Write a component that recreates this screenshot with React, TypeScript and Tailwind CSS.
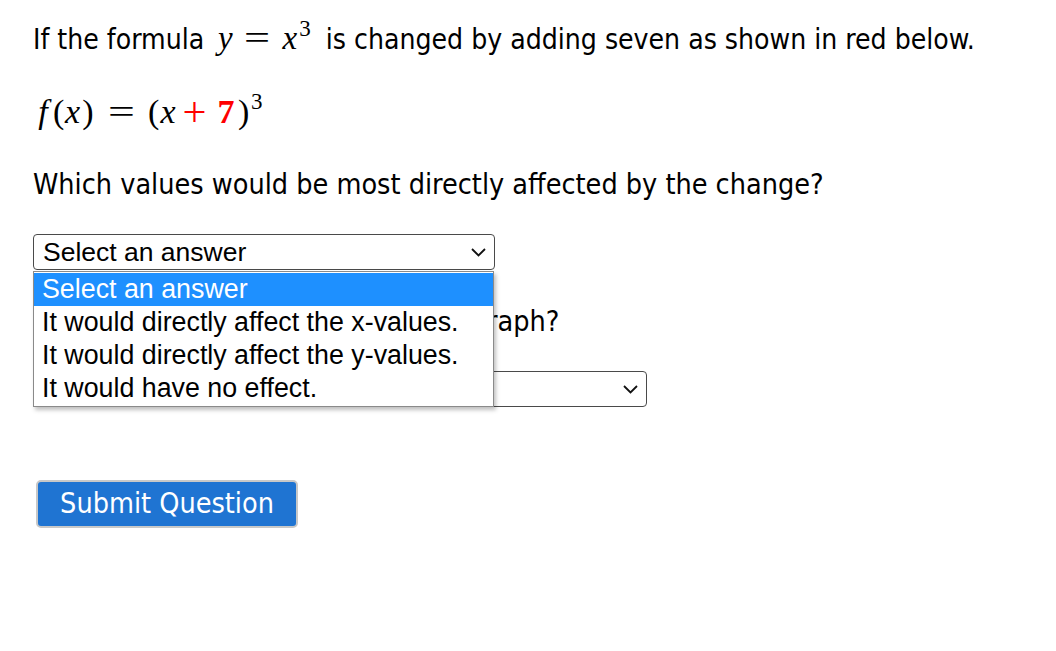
import React from "react";

function Chevron() {
  return (
    <svg width="15" height="9" viewBox="0 0 15 9" className="shrink-0">
      <polyline points="1,1 7.5,7.5 14,1" fill="none" stroke="#111" strokeWidth="1.8" />
    </svg>
  );
}

// one math glyph in a fixed-width slot
function G({ w, italic, children }: { w: string; italic?: boolean; children: React.ReactNode }) {
  return <span className={"inline-block text-center " + w + (italic ? " italic" : "")}>{children}</span>;
}

function Eq({ w }: { w: string }) {
  return <span className={"inline-block scale-x-[1.4] text-center " + w}>=</span>;
}

const options = [
  "Select an answer",
  "It would directly affect the x-values.",
  "It would directly affect the y-values.",
  "It would have no effect.",
];

function SelectBox({ width }: { width: string }) {
  return (
    <div
      className={
        "flex h-[36px] items-center justify-between rounded-[4px] border-[1.5px] border-[#4a4a4a] pl-[9px] pr-[8px] font-['Liberation_Sans',Arial,sans-serif] text-[26.5px] leading-none " +
        width
      }
    >
      <span>Select an answer</span>
      <Chevron />
    </div>
  );
}

export default function App() {
  return (
    <div className="relative min-h-[651px] bg-white pl-[33px] pt-[20px] text-black">
      <p className="h-[36px] whitespace-nowrap font-['DejaVu_Sans_Condensed','DejaVu_Sans',sans-serif] text-[28.1px] leading-[36px]">
        If the formula{" "}
        <span className="ml-[5px] mr-[7px] font-['Liberation_Serif','DejaVu_Serif',serif] text-[33px]">
          <G w="w-[16px]" italic>y</G>
          <Eq w="w-[22px] ml-[13px]" />
          <G w="w-[17px] ml-[13px]" italic>x</G>
          <span className="relative -top-[13px] ml-[1px] text-[23px]">3</span>
        </span>{" "}
        is changed by adding seven as shown in red below.
      </p>

      <p className="mt-[38px] h-[36px] whitespace-nowrap font-['Liberation_Serif','DejaVu_Serif',serif] text-[34px] leading-[36px]">
        <G w="w-[20px]" italic>f</G>
        <G w="w-[10px]">(</G>
        <G w="w-[19px]" italic>x</G>
        <G w="w-[12px]">)</G>
        <Eq w="w-[23px] ml-[16px]" />
        <G w="w-[10px] ml-[15px]">(</G>
        <G w="w-[20px]" italic>x</G>
        <span className="text-[#ff0000]">
          <G w="w-[23px] ml-[5px] scale-[1.25]">+</G>
          <G w="w-[24px] ml-[8px] font-bold">7</G>
        </span>
        <G w="w-[10px]">)</G>
        <span className="relative -top-[14px] ml-[3px] text-[23px]">3</span>
      </p>

      <p className="mt-[37px] h-[36px] font-['DejaVu_Sans_Condensed','DejaVu_Sans',sans-serif] text-[28.5px] leading-[36px]">
        Which values would be most directly affected by the change?
      </p>

      <div className="mt-[31px]">
        <SelectBox width="w-[462px]" />
      </div>

      <p className="mt-[34px] h-[36px] font-['DejaVu_Sans_Condensed','DejaVu_Sans',sans-serif] text-[28.5px] leading-[36px]">
        How would this change affect the graph?
      </p>

      <div className="mt-[31px]">
        <SelectBox width="w-[614px]" />
      </div>

      <button className="ml-[3px] mt-[73px] h-[48px] w-[262px] rounded-[5px] border-2 border-[#c8c8c8] bg-[#1f74d2] font-['DejaVu_Sans_Condensed','DejaVu_Sans',sans-serif] text-[28.5px] text-white">
        Submit Question
      </button>

      <ul className="absolute left-[33px] top-[271px] w-[461px] border border-[#8a8a8a] bg-white py-[1px] font-['Liberation_Sans',Arial,sans-serif] text-[26.8px] shadow-[2px_3px_4px_rgba(0,0,0,0.25)]">
        {options.map((o, i) => (
          <li
            key={o}
            className={"h-[33px] pl-[8px] leading-[33px] " + (i === 0 ? "bg-[#1e90ff] text-white" : "")}
          >
            {o}
          </li>
        ))}
      </ul>
    </div>
  );
}
